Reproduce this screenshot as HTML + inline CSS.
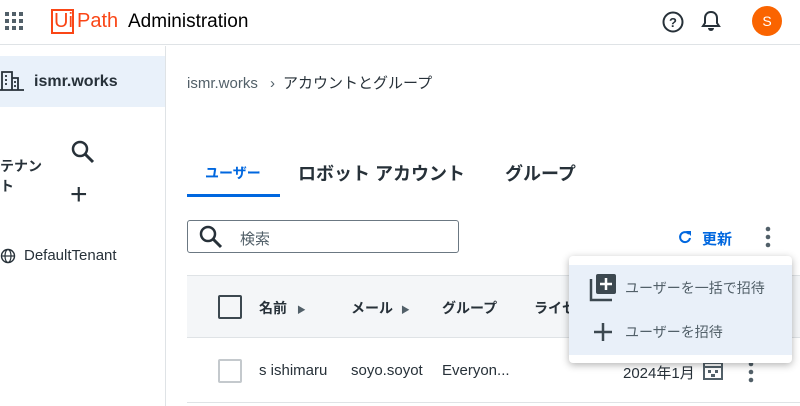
<!DOCTYPE html><html><head><meta charset="utf-8"><style>
*{margin:0;padding:0;box-sizing:border-box}
body{width:800px;height:406px;overflow:hidden;background:#fff;font-family:"Liberation Sans","Noto Sans CJK JP",sans-serif;color:#273139;position:relative}
.a{position:absolute}
</style></head><body>
<div class="a" style="left:0;top:0;width:800px;height:45px;border-bottom:1px solid #dfe3e6"></div>
<svg class="a" style="left:5px;top:12px" width="18" height="18"><g fill="#526069"><rect x="0" y="0" width="4" height="4"/><rect x="7" y="0" width="4" height="4"/><rect x="14" y="0" width="4" height="4"/><rect x="0" y="7" width="4" height="4"/><rect x="7" y="7" width="4" height="4"/><rect x="14" y="7" width="4" height="4"/><rect x="0" y="14" width="4" height="4"/><rect x="7" y="14" width="4" height="4"/><rect x="14" y="14" width="4" height="4"/></g></svg>
<div class="a" style="left:51px;top:9px;width:23px;height:25px;border:2px solid #fa4616"></div>
<div class="a" style="left:54px;top:9px;font-size:20px;color:#fa4616;line-height:25px">Ui</div>
<div class="a" style="left:77px;top:9px;font-size:20px;color:#fa4616;line-height:25px">Path</div>
<div class="a" style="left:128px;top:9px;font-size:19px;color:#000;line-height:25px;font-weight:500">Administration</div>
<svg class="a" style="left:661px;top:10px" width="24" height="24"><circle cx="12" cy="12" r="9.5" fill="none" stroke="#273139" stroke-width="2"/><text x="12" y="17" font-size="13" font-weight="bold" text-anchor="middle" fill="#273139" font-family="Liberation Sans">?</text></svg>
<svg class="a" style="left:700px;top:9px" width="22" height="24"><path d="M11 3c-4 0-6 3-6 6v5l-2 3h16l-2-3V9c0-3-2-6-6-6z" fill="none" stroke="#273139" stroke-width="2"/><path d="M8 19a3 3 0 006 0" fill="#273139"/></svg>
<div class="a" style="left:752px;top:6px;width:30px;height:30px;border-radius:50%;background:#fa6400;color:#fff;font-size:14px;line-height:30px;text-align:center">S</div>
<div class="a" style="left:165px;top:46px;width:1px;height:360px;background:#dfe3e6"></div>
<div class="a" style="left:0;top:56px;width:165px;height:51px;background:#e9f1fa"></div>
<svg class="a" style="left:0;top:70px" width="24" height="22"><path d="M2 20V2h10v18M12 8h6v12M0 20h24M5 6h2M5 10h2M5 14h2M14 12h2M14 16h2" fill="none" stroke="#273139" stroke-width="1.8"/></svg>
<div class="a" style="left:34px;top:73px;font-size:16px;font-weight:bold;color:#273139">ismr.works</div>
<div class="a" style="left:0;top:156px;font-size:14px;font-weight:bold;line-height:20px">テナン<br>ト</div>
<svg class="a" style="left:70px;top:139px" width="26" height="26"><circle cx="10" cy="10" r="7" fill="none" stroke="#273139" stroke-width="2.5"/><path d="M15 15l8 8" stroke="#273139" stroke-width="3"/></svg>
<div class="a" style="left:70px;top:180px;font-size:30px;line-height:30px;font-weight:300">+</div>
<svg class="a" style="left:0;top:248px" width="16" height="16"><circle cx="8" cy="8" r="6.5" fill="none" stroke="#273139" stroke-width="1.4"/><ellipse cx="8" cy="8" rx="3" ry="6.5" fill="none" stroke="#273139" stroke-width="1.2"/><path d="M1.5 8h13" stroke="#273139" stroke-width="1.2"/></svg>
<div class="a" style="left:24px;top:247px;font-size:15px">DefaultTenant</div>
<div class="a" style="left:187px;top:72px;font-size:15px;color:#526069">ismr.works <span style="margin:0 8px">›</span><span style="color:#273139">アカウントとグループ</span></div>
<div class="a" style="left:205px;top:163px;font-size:14px;font-weight:bold;color:#0067df">ユーザー</div>
<div class="a" style="left:187px;top:194px;width:93px;height:3px;background:#0067df"></div>
<div class="a" style="left:298px;top:160px;font-size:18px;font-weight:bold">ロボット アカウント</div>
<div class="a" style="left:505px;top:160px;font-size:18px;font-weight:bold">グループ</div>
<div class="a" style="left:187px;top:220px;width:272px;height:33px;border:1px solid #6b7882;border-radius:3px"></div>
<svg class="a" style="left:198px;top:224px" width="26" height="26"><circle cx="10" cy="10" r="7" fill="none" stroke="#273139" stroke-width="2.5"/><path d="M15 15l8 8" stroke="#273139" stroke-width="3"/></svg>
<div class="a" style="left:240px;top:228px;font-size:15px;color:#526069">検索</div>
<svg class="a" style="left:678px;top:230px" width="14" height="14"><path d="M11 4A5 5 0 1 0 12 8" fill="none" stroke="#0067df" stroke-width="2"/><path d="M8 1h5v5z" fill="#0067df"/></svg>
<div class="a" style="left:702px;top:228px;font-size:15px;font-weight:bold;color:#0067df">更新</div>
<svg class="a" style="left:764px;top:225px" width="8" height="24"><circle cx="4" cy="4" r="2.3" fill="#526069"/><circle cx="4" cy="12" r="2.3" fill="#526069"/><circle cx="4" cy="20" r="2.3" fill="#526069"/></svg>
<div class="a" style="left:187px;top:275px;width:613px;height:63px;background:#f4f6f8;border-top:1px solid #dfe3e6;border-bottom:1px solid #dfe3e6"></div>
<div class="a" style="left:218px;top:295px;width:24px;height:24px;border:2.5px solid #3c4850;border-radius:2px"></div>
<div class="a" style="left:259px;top:298px;font-size:14px;font-weight:bold">名前 <span style="font-size:9px;color:#526069;margin-left:6px">▶</span></div>
<div class="a" style="left:351px;top:298px;font-size:14px;font-weight:bold">メール <span style="font-size:9px;color:#526069;margin-left:4px">▶</span></div>
<div class="a" style="left:442px;top:298px;font-size:14px;font-weight:bold">グループ</div>
<div class="a" style="left:534px;top:298px;font-size:14px;font-weight:bold">ライセ</div>
<div class="a" style="left:187px;top:402px;width:613px;height:1px;background:#dfe3e6"></div>
<div class="a" style="left:218px;top:359px;width:24px;height:24px;border:2px solid #c4c9cd;border-radius:2px"></div>
<div class="a" style="left:259px;top:362px;font-size:15px">s ishimaru</div>
<div class="a" style="left:351px;top:362px;font-size:15px">soyo.soyot</div>
<div class="a" style="left:442px;top:362px;font-size:15px">Everyon...</div>
<div class="a" style="left:623px;top:362px;font-size:15px">2024年1月</div>
<svg class="a" style="left:703px;top:361px" width="20" height="19"><rect x="1" y="2" width="18" height="16" fill="none" stroke="#526069" stroke-width="2"/><path d="M1 6h18" stroke="#526069" stroke-width="2"/><rect x="5" y="9" width="3" height="3" fill="#526069"/><rect x="12" y="9" width="3" height="3" fill="#526069"/><rect x="8" y="13" width="4" height="3" fill="#526069"/></svg>
<svg class="a" style="left:747px;top:360px" width="8" height="24"><circle cx="4" cy="4" r="2.3" fill="#526069"/><circle cx="4" cy="12" r="2.3" fill="#526069"/><circle cx="4" cy="20" r="2.3" fill="#526069"/></svg>
<div class="a" style="left:569px;top:256px;width:223px;height:107px;background:#fff;border-radius:4px;box-shadow:0 2px 8px rgba(0,0,0,.3)"></div>
<div class="a" style="left:569px;top:265px;width:223px;height:90px;background:#e9f0f9"></div>
<svg class="a" style="left:588px;top:273px" width="30" height="30"><path d="M3 6v21h21" fill="none" stroke="#3c4850" stroke-width="2.5"/><rect x="8" y="1" width="20" height="20" rx="2" fill="#3c4850"/><path d="M18 5v12M12 11h12" stroke="#fff" stroke-width="2.5"/></svg>
<div class="a" style="left:625px;top:278px;font-size:14px;color:#526069">ユーザーを一括で招待</div>
<svg class="a" style="left:592px;top:321px" width="22" height="22"><path d="M11 2v18M2 11h18" stroke="#3c4850" stroke-width="2.5"/></svg>
<div class="a" style="left:625px;top:322px;font-size:14px;color:#526069">ユーザーを招待</div>
</body></html>
